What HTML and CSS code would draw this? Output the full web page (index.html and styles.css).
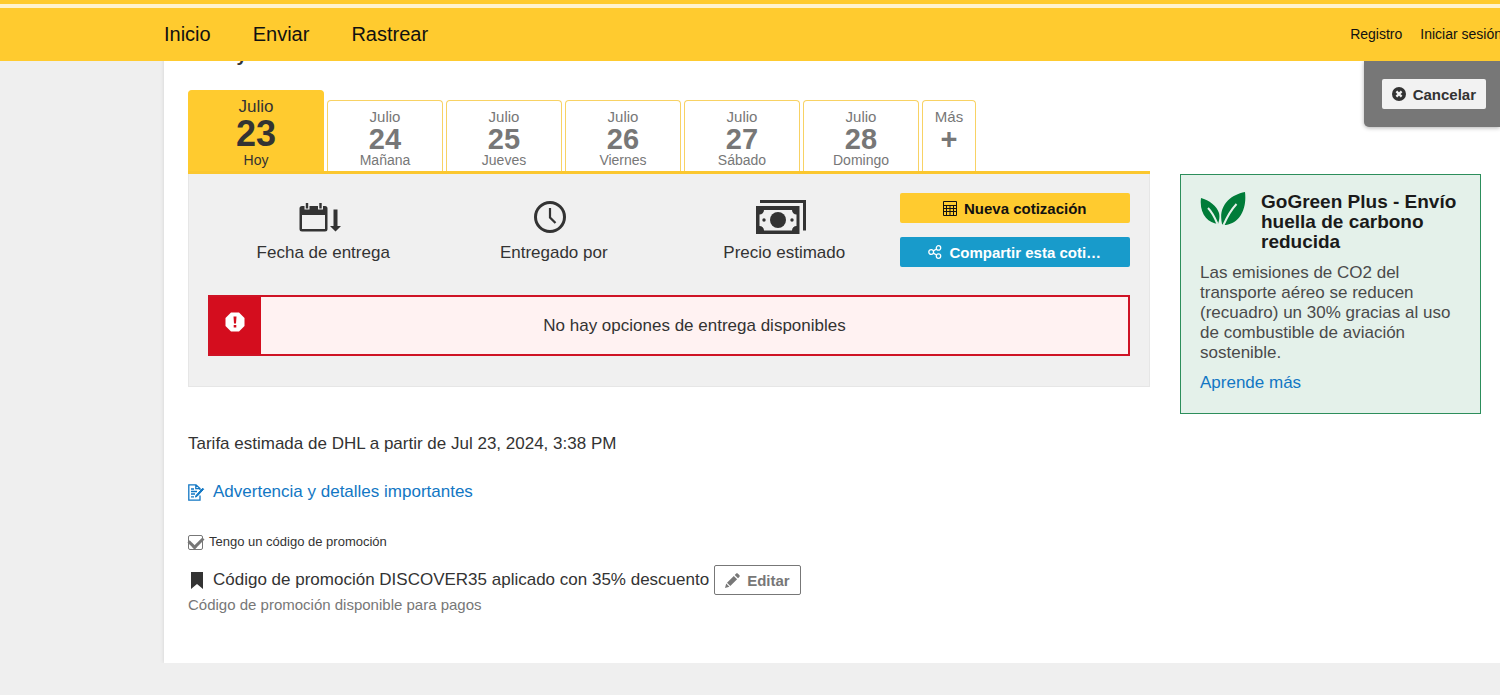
FILE: index.html
```
<!DOCTYPE html>
<html lang="es">
<head>
  <meta charset="UTF-8">
  <meta name="viewport" content="width=device-width, initial-scale=1.0">
  <title>Cotización</title>
  <link rel="stylesheet" href="styles.css">
</head>
<body>
  <header class="header">
    <div class="header-line"></div>
    <div class="header-row">
      <nav class="nav">
        <a href="#">Inicio</a>
        <a href="#">Enviar</a>
        <a href="#">Rastrear</a>
      </nav>
      <nav class="account">
        <a href="#">Registro</a>
        <a href="#">Iniciar sesión</a>
      </nav>
    </div>
  </header>

  <div class="cancel-panel">
    <button class="btn btn-cancel" type="button">
      <svg width="14" height="14" viewBox="0 0 14 14"><circle cx="7" cy="7" r="7" fill="#333"/><path d="M4.4 4.4l5.2 5.2M9.6 4.4L4.4 9.6" stroke="#f2f2f2" stroke-width="2.2"/></svg>
      Cancelar
    </button>
  </div>

  <main class="sheet">
    <h2 class="title">Hora y fecha</h2>

    <div class="columns">
      <section class="quote">
        <div class="days">
          <button class="day active" type="button"><span>Julio</span><b>23</b><small>Hoy</small></button>
          <button class="day" type="button"><span>Julio</span><b>24</b><small>Mañana</small></button>
          <button class="day" type="button"><span>Julio</span><b>25</b><small>Jueves</small></button>
          <button class="day" type="button"><span>Julio</span><b>26</b><small>Viernes</small></button>
          <button class="day" type="button"><span>Julio</span><b>27</b><small>Sábado</small></button>
          <button class="day" type="button"><span>Julio</span><b>28</b><small>Domingo</small></button>
          <button class="day more" type="button"><span>Más</span><b>+</b></button>
        </div>

        <div class="panel">
          <div class="summary">
            <div class="item">
              <svg width="42" height="36" viewBox="0 0 42 36">
                <path d="M3 7H26a2.500 2.500 0 0 1 2.500 2.500V30a2.500 2.500 0 0 1-2.500 2.500H3A2.500 2.500 0 0 1 .5 30V9.500A2.500 2.500 0 0 1 3 7z" fill="#333"/>
                <path d="M3 16h23v14H3z" fill="#f0f0f0"/>
                <path d="M5.500 4h5v6.500h-5zM19 4h5v6.500h-5z" fill="#f0f0f0"/>
                <path d="M6.800 4h2.400v5.500H6.800zM20.300 4h2.400v5.500h-2.400z" fill="#333"/>
                <path d="M34.500 10.500h4V27H42l-5.500 5.500L31 27h3.500z" fill="#333"/>
              </svg>
              <span>Fecha de entrega</span>
            </div>
            <div class="item">
              <svg width="34" height="36" viewBox="0 0 34 36" fill="none" stroke="#333">
                <circle cx="17" cy="18" r="14.500" stroke-width="3"/>
                <path d="M17 9v9.500l5.500 5.500" stroke-width="2.200"/>
              </svg>
              <span>Entregado por</span>
            </div>
            <div class="item">
              <svg width="50" height="36" viewBox="0 0 50 36">
                <path d="M4 2.500h44.500v29" fill="none" stroke="#333" stroke-width="3"/>
                <path d="M0 7h43.500v28H0z" fill="#333"/>
                <path d="M8 11h28a4.500 4.500 0 0 0 4.500 4.500v11.500a4.500 4.500 0 0 0-4.500 4.500H8A4.500 4.500 0 0 0 3.500 27V15.500A4.500 4.500 0 0 0 8 11z" fill="#f0f0f0"/>
                <circle cx="22" cy="21" r="8" fill="#333"/>
                <circle cx="8" cy="21" r="1.700" fill="#333"/>
                <circle cx="36" cy="21" r="1.700" fill="#333"/>
              </svg>
              <span>Precio estimado</span>
            </div>
            <div class="actions">
              <button class="btn btn-new" type="button">
                <svg width="14" height="15" viewBox="0 0 14 15" fill="none" stroke="#111"><path d="M.5.5h13v14H.5z"/><path d="M.5 4.500h13M.5 7.500h13M.5 10.500h13M3.500 4.500v10M7 4.500v10M10.500 4.500v10"/></svg>
                Nueva cotización
              </button>
              <button class="btn btn-share" type="button">
                <svg width="14" height="14" viewBox="0 0 14 14" fill="none" stroke="#fff" stroke-width="1.300"><circle cx="3.200" cy="7" r="2.400"/><circle cx="10.500" cy="2.900" r="2.200"/><circle cx="10.500" cy="11.100" r="2.200"/><path d="M5.300 5.900l3.300-1.900M5.300 8.100l3.300 1.900"/></svg>
                Compartir esta coti…
              </button>
            </div>
          </div>

          <div class="alert" role="alert">
            <div class="alert-icon">
              <svg width="20" height="20" viewBox="0 0 20 20"><path d="M6 .5h8L19.500 6v8L14 19.500H6L.5 14V6z" fill="#fff"/><path d="M8.500 4.500h3l-.5 7H9zM8.700 13h2.600v2.600H8.700z" fill="#d40d1e"/></svg>
            </div>
            <p>No hay opciones de entrega disponibles</p>
          </div>
        </div>
      </section>

      <aside class="gogreen">
        <div class="gogreen-head">
          <svg width="46" height="34" viewBox="0 0 46 34">
            <path d="M1 6c8 2 16 8 18 15 1 4 0 8-1 11C8 31-1 22 1 6zM45 0c2 17-5 31-19 33-2 0-3 0-4-1C18 15 29 3 45 0z" fill="#007c39"/>
            <path d="M8 16c4 4 7 10 9.500 16M36.500 12C31 18 27 25 23.500 33" fill="none" stroke="#e4f1ea" stroke-width="2"/>
          </svg>
          <h3>GoGreen Plus - Envío huella de carbono reducida</h3>
        </div>
        <p>Las emisiones de CO2 del transporte aéreo se reducen (recuadro) un 30% gracias al uso de combustible de aviación sostenible.</p>
        <a href="#">Aprende más</a>
      </aside>
    </div>

    <p class="rate">Tarifa estimada de DHL a partir de Jul 23, 2024, 3:38 PM</p>

    <a class="notice" href="#">
      <svg width="17" height="17" viewBox="0 0 17 17" fill="none" stroke="#1277c4" stroke-width="1.300"><path d="M12 11.500v4.600H.8V.8H8l4 3.700v1.500M7.800.8v3.900H12M3 5h3M3 7.500h6M3 10h4M3 12.800h3"/><path d="M15.700 5.200L9 12.400l-1.500.7.500-1.700 6.700-7.200z" fill="#1277c4" stroke-width="1"/></svg>
      Advertencia y detalles importantes
    </a>

    <div class="check">
      <input type="checkbox" id="promo" checked>
      <label for="promo">Tengo un código de promoción</label>
    </div>

    <div class="promo">
      <svg width="12" height="17" viewBox="0 0 12 17"><path d="M0 0h12v17l-6-5-6 5z" fill="#333"/></svg>
      <span>Código de promoción DISCOVER35 aplicado con 35% descuento</span>
      <button class="btn btn-edit" type="button">
        <svg width="15" height="15" viewBox="0 0 15 15" fill="#777"><path d="M0 15l1.200-4.400 3.200 3.200zM2 9.700l6.800-6.800 3.300 3.300-6.800 6.800zM9.700 2L11 .7c.6-.6 1.300-.6 1.900 0L14.300 2c.6.6.6 1.400 0 2L13 5.300z"/></svg>
        Editar
      </button>
    </div>
    <p class="hint">Código de promoción disponible para pagos</p>
  </main>
</body>
</html>
```
FILE: styles.css
```
* {
  box-sizing: border-box;
}

body {
  margin: 0;
  font-family: "Liberation Sans", Arial, sans-serif;
  font-size: 17px;
  line-height: 20px;
  color: #333;
  background: #efefef;
  overflow-x: hidden;
}

h2, h3, p {
  margin: 0;
}

a {
  color: #1277c4;
  text-decoration: none;
}

button {
  font-family: inherit;
  cursor: pointer;
}

svg {
  flex: none;
}

/* header */
.header {
  position: sticky;
  top: 0;
  z-index: 2;
  height: 61px;
  padding-top: 4px;
  background: #ffcb2f;
  overflow: hidden;
}

.header-line {
  height: 4px;
  background: #fff3cf;
}

.header-row {
  display: flex;
  justify-content: space-between;
  align-items: center;
  height: 52px;
  padding-left: 164px;
}

.header a {
  color: #111;
  white-space: nowrap;
}

.nav {
  display: flex;
  gap: 42px;
  font-size: 20px;
}

.account {
  display: flex;
  gap: 18px;
  margin-right: -2px;
  font-size: 14px;
}

.cancel-panel {
  position: absolute;
  top: 61px;
  right: 0;
  z-index: 1;
  padding: 18px 14px 18px 18px;
  background: #777;
  border-radius: 0 0 0 5px;
  box-shadow: 0 1px 4px rgba(0, 0, 0, 0.3);
}

/* buttons */
.btn {
  display: flex;
  justify-content: center;
  align-items: center;
  gap: 7px;
  height: 30px;
  padding: 0 10px;
  border: none;
  border-radius: 2px;
  font-size: 15px;
  font-weight: bold;
  white-space: nowrap;
}

.btn-cancel {
  color: #333;
  background: #f2f2f2;
}

.btn-new {
  color: #111;
  background: #ffcb2f;
}

.btn-share {
  color: #fff;
  background: #189bcb;
}

.btn-edit {
  color: #777;
  background: #fff;
  border: 1px solid #777;
}

/* page */
.sheet {
  margin-left: 164px;
  padding: 0 19px 48px 24px;
  background: #fff;
  box-shadow: 0 0 4px rgba(0, 0, 0, 0.12);
}

/* slides under the sticky header */
.title {
  margin-top: -16px;
  height: 45px;
  font-size: 19px;
}

.columns {
  display: flex;
  align-items: flex-start;
  gap: 30px;
}

.quote {
  flex: 1;
}

/* day tabs */
.days {
  display: flex;
  align-items: flex-end;
  gap: 3px;
  height: 84px;
  border-bottom: 3px solid #fbc72f;
}

.day {
  display: flex;
  flex-direction: column;
  align-items: center;
  flex: 0 1 116px;
  height: 71px;
  padding: 8px 0 0;
  border: 1px solid #f8d264;
  border-bottom: none;
  border-radius: 4px 4px 0 0;
  color: #777;
  background: #fff;
  font-size: 15px;
  line-height: 16px;
}

.day b {
  font-size: 29px;
  line-height: 28px;
}

.day small {
  font-size: 14px;
  line-height: 15px;
}

.day.active {
  flex-basis: 136px;
  height: 81px;
  border-color: #ffcb2f;
  color: #333;
  background: #ffcb2f;
  font-size: 17px;
}

.day.active b {
  font-size: 36px;
  line-height: 38px;
}

.day.more {
  flex-basis: 54px;
}

/* quote panel */
.panel {
  padding: 19px 19px 30px;
  background: #f0f0f0;
  border: 1px solid #e6e6e6;
  border-top: none;
}

.summary {
  display: grid;
  grid-template-columns: repeat(4, 1fr);
  margin-bottom: 28px;
}

.item {
  display: flex;
  flex-direction: column;
  align-items: center;
  gap: 8px;
  padding-top: 6px;
}

.item svg {
  margin-right: 7px;
}

.actions {
  display: flex;
  flex-direction: column;
  gap: 14px;
}

.alert {
  display: flex;
  height: 61px;
  background: #fff2f2;
  border: 2px solid #cf1325;
}

.alert-icon {
  display: flex;
  justify-content: center;
  width: 51px;
  padding: 15px 2px 0 0;
  background: #d40d1e;
}

.alert p {
  flex: 1;
  text-align: center;
  line-height: 57px;
}

/* gogreen box */
.gogreen {
  width: 301px;
  margin-top: 84px;
  padding: 17px 16px 20px 19px;
  background: #e4f1ea;
  border: 1px solid #2c8e5b;
  color: #4a4a4a;
}

.gogreen-head {
  display: flex;
  gap: 15px;
  margin-bottom: 11px;
}

.gogreen-head h3 {
  color: #1a1a1a;
  font-size: 19px;
}

.gogreen p {
  margin-bottom: 10px;
}

/* details */
.rate {
  margin-top: 20px;
}

.notice {
  display: flex;
  align-items: center;
  gap: 8px;
  margin-top: 28px;
}

.check {
  display: flex;
  align-items: center;
  gap: 6px;
  margin-top: 30px;
  font-size: 13px;
}

.check input {
  display: grid;
  place-items: center;
  appearance: none;
  width: 15px;
  height: 15px;
  margin: 0;
  border: 1px solid #777;
  border-radius: 2px;
}

.check input:checked::before {
  content: "";
  width: 11px;
  height: 7px;
  margin-bottom: 3px;
  border: solid #777;
  border-width: 0 0 3px 3px;
  transform: rotate(-45deg);
}

.promo {
  display: flex;
  align-items: center;
  gap: 5px;
  margin-top: 13px;
  padding-left: 3px;
}

.promo > svg {
  margin-right: 5px;
}

.hint {
  color: #777;
  font-size: 15px;
}
```
